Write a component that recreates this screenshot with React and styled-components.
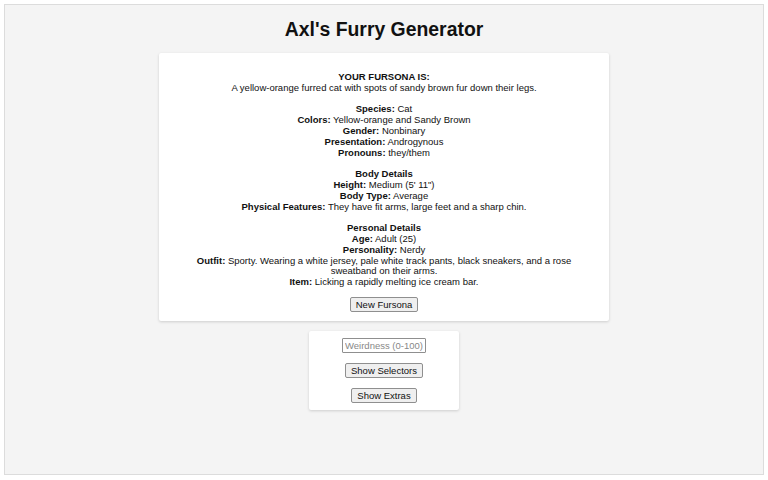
import React from 'react';
import styled, { createGlobalStyle } from 'styled-components';

const GlobalStyle = createGlobalStyle`
  body {
    margin: 0;
    background: #ffffff;
    font-family: "Liberation Sans", Arial, sans-serif;
    color: #111;
  }
`;

const Page = styled.div`
  padding: 4px 4px 5px 4px;
`;

const Frame = styled.div`
  box-sizing: border-box;
  height: 471px;
  border: 1px solid #dcdcdc;
  background: #f4f4f4;
  display: flex;
  flex-direction: column;
  align-items: center;
`;

const Title = styled.h1`
  margin: 13px 0 13px;
  font-size: 19.4px;
  line-height: 22px;
  font-weight: bold;
  color: #111;
`;

const Card = styled.div`
  box-sizing: border-box;
  width: ${(p) => p.$width}px;
  background: #fff;
  border-radius: 2px;
  box-shadow: 0 1px 3px rgba(0, 0, 0, 0.16);
  padding: ${(p) => p.$pad};
  display: flex;
  flex-direction: column;
  align-items: center;
  margin-bottom: 10px;
`;

const Result = styled.div`
  text-align: center;
  font-size: 9.5px;
  line-height: 10.8px;
  padding: 0 37px;
`;

const Block = styled.p`
  margin: 0 0 10.8px;
`;

const Button = styled.button`
  font-family: "Liberation Sans", Arial, sans-serif;
  font-size: 9.5px;
  line-height: 11px;
  padding: 1px 5px;
  color: #111;
  background: #efefef;
  border: 1px solid #8f8f8f;
  border-radius: 2px;
  margin-top: ${(p) => p.$top || 0}px;
`;

const Input = styled.input`
  box-sizing: border-box;
  width: 84px;
  height: 15px;
  font-family: "Liberation Sans", Arial, sans-serif;
  font-size: 9.5px;
  padding: 0 2px;
  border: 1px solid #8f8f8f;
  border-radius: 1px;
  &::placeholder {
    color: #888;
  }
`;

const Field = ({ label, children }) => (
  <>
    <b>{label}:</b> {children}
    <br />
  </>
);

export default function App() {
  return (
    <Page>
      <GlobalStyle />
      <Frame>
        <Title>Axl's Furry Generator</Title>
        <Card $width={450} $pad="19px 0 9px">
          <Result>
            <Block>
              <b>YOUR FURSONA IS:</b>
              <br />
              A yellow-orange furred cat with spots of sandy brown fur down their legs.
            </Block>
            <Block>
              <Field label="Species">Cat</Field>
              <Field label="Colors">Yellow-orange and Sandy Brown</Field>
              <Field label="Gender">Nonbinary</Field>
              <Field label="Presentation">Androgynous</Field>
              <Field label="Pronouns">they/them</Field>
            </Block>
            <Block>
              <b>Body Details</b>
              <br />
              <Field label="Height">Medium (5' 11")</Field>
              <Field label="Body Type">Average</Field>
              <Field label="Physical Features">They have fit arms, large feet and a sharp chin.</Field>
            </Block>
            <Block style={{ marginBottom: 0 }}>
              <b>Personal Details</b>
              <br />
              <Field label="Age">Adult (25)</Field>
              <Field label="Personality">Nerdy</Field>
              <Field label="Outfit">
                Sporty. Wearing a white jersey, pale white track pants, black sneakers, and a rose sweatband on their arms.
              </Field>
              <Field label="Item">Licking a rapidly melting ice cream bar.</Field>
            </Block>
          </Result>
          <Button $top={9}>New Fursona</Button>
        </Card>
        <Card $width={150} $pad="7px 0 7px">
          <Input placeholder="Weirdness (0-100)" />
          <Button $top={10}>Show Selectors</Button>
          <Button $top={10}>Show Extras</Button>
        </Card>
      </Frame>
    </Page>
  );
}
